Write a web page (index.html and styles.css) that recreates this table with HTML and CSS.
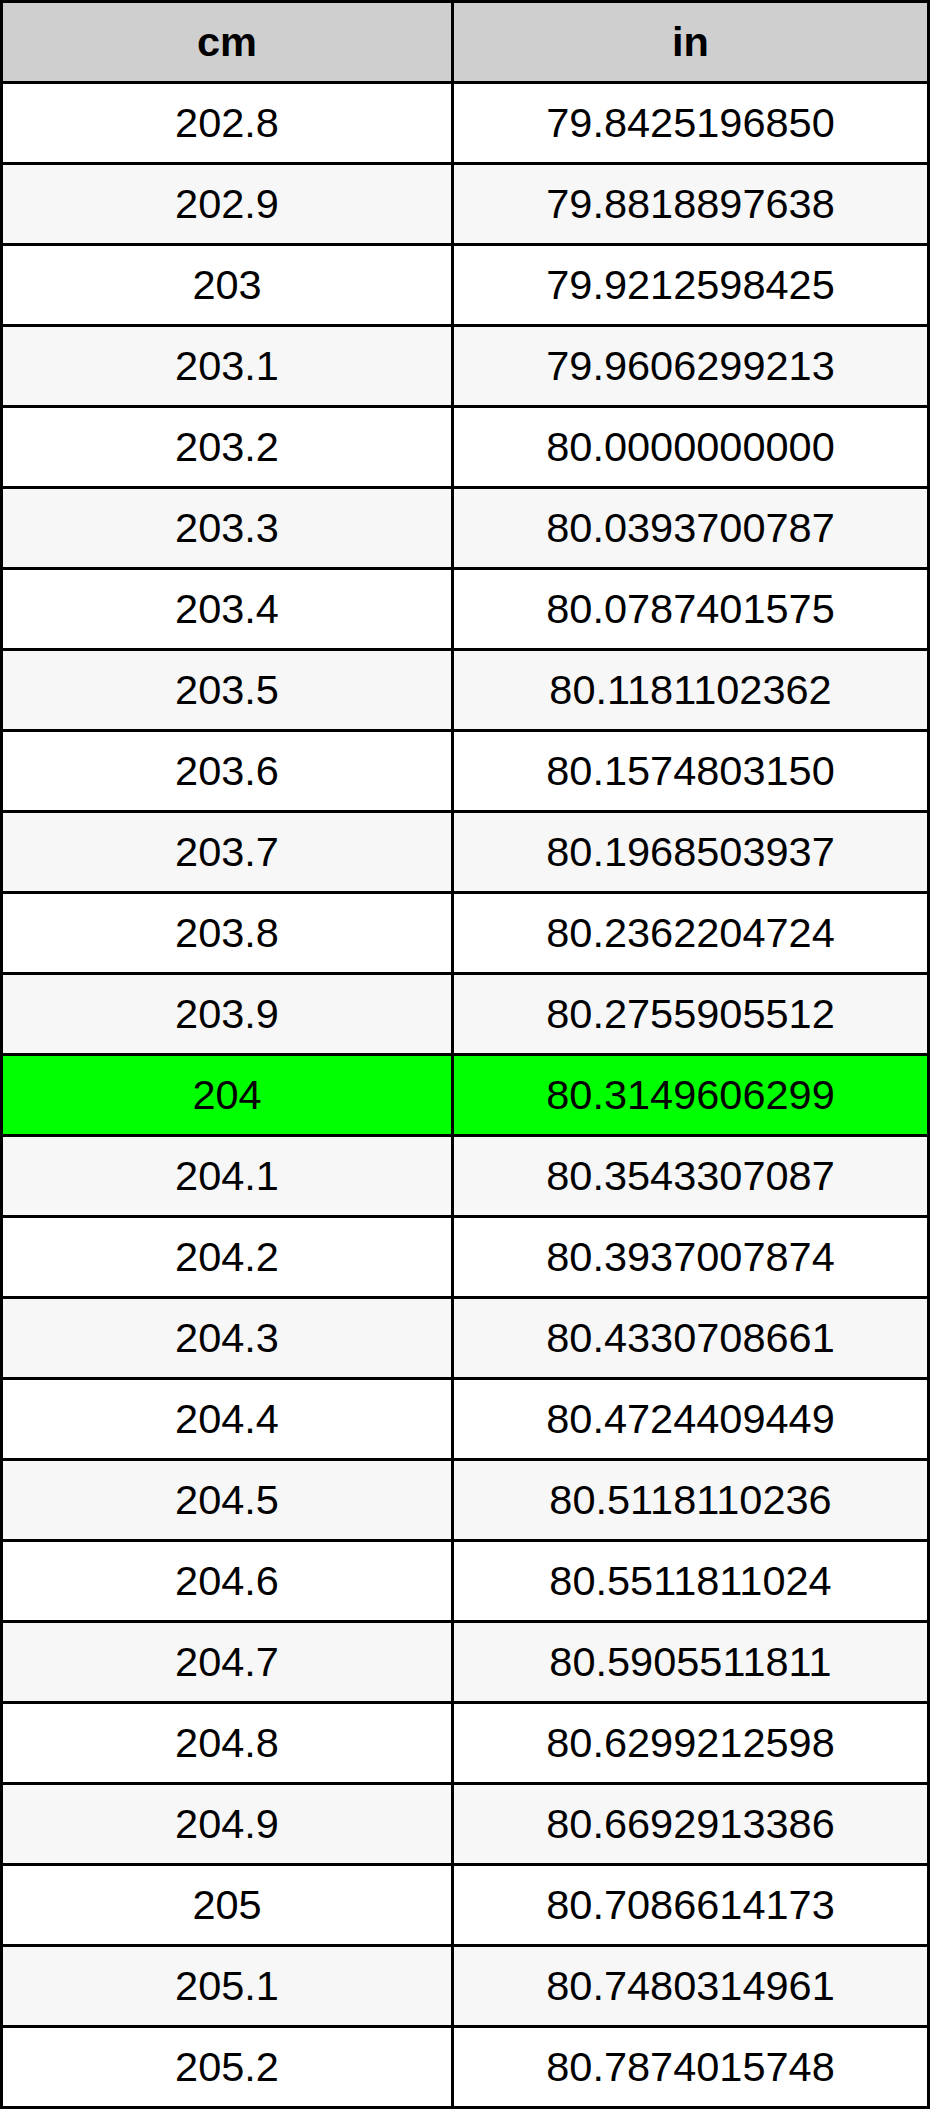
FILE: index.html
```html
<!DOCTYPE html>
<html>
<head>
<meta charset="utf-8">
<link rel="stylesheet" href="styles.css">
</head>
<body>
<table class="conv">
<thead>
<tr><th class="c1">cm</th><th class="c2">in</th></tr>
</thead>
<tbody>
<tr><td>202.8</td><td>79.8425196850</td></tr>
<tr><td>202.9</td><td>79.8818897638</td></tr>
<tr><td>203</td><td>79.9212598425</td></tr>
<tr><td>203.1</td><td>79.9606299213</td></tr>
<tr><td>203.2</td><td>80.0000000000</td></tr>
<tr><td>203.3</td><td>80.0393700787</td></tr>
<tr><td>203.4</td><td>80.0787401575</td></tr>
<tr><td>203.5</td><td>80.1181102362</td></tr>
<tr><td>203.6</td><td>80.1574803150</td></tr>
<tr><td>203.7</td><td>80.1968503937</td></tr>
<tr><td>203.8</td><td>80.2362204724</td></tr>
<tr><td>203.9</td><td>80.2755905512</td></tr>
<tr class="hl"><td>204</td><td>80.3149606299</td></tr>
<tr><td>204.1</td><td>80.3543307087</td></tr>
<tr><td>204.2</td><td>80.3937007874</td></tr>
<tr><td>204.3</td><td>80.4330708661</td></tr>
<tr><td>204.4</td><td>80.4724409449</td></tr>
<tr><td>204.5</td><td>80.5118110236</td></tr>
<tr><td>204.6</td><td>80.5511811024</td></tr>
<tr><td>204.7</td><td>80.5905511811</td></tr>
<tr><td>204.8</td><td>80.6299212598</td></tr>
<tr><td>204.9</td><td>80.6692913386</td></tr>
<tr><td>205</td><td>80.7086614173</td></tr>
<tr><td>205.1</td><td>80.7480314961</td></tr>
<tr><td>205.2</td><td>80.7874015748</td></tr>
</tbody>
</table>
</body>
</html>
```
FILE: styles.css
```css
html, body {
  margin: 0;
  padding: 0;
  background: #ffffff;
}
.conv {
  border-collapse: collapse;
  width: 930px;
  table-layout: fixed;
  font-family: "Liberation Sans", Arial, sans-serif;
  font-size: 41.5px;
  color: #000;
}
.conv th, .conv td {
  border: 3px solid #000;
  padding: 0;
  height: 78px;
  text-align: center;
  vertical-align: middle;
  line-height: 1;
}
.conv th {
  background: #cfcfcf;
  font-weight: bold;
}
.conv .c1 { width: 448px; }
.conv tbody tr:nth-child(odd) td { background: #ffffff; }
.conv tbody tr:nth-child(even) td { background: #f7f7f7; }
.conv tbody tr.hl td { background: #00ff00; }
```
